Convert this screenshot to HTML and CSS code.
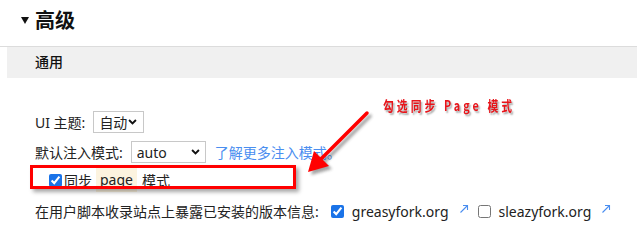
FILE: index.html
```html
<!DOCTYPE html>
<html lang="zh">
<head>
<meta charset="utf-8">
<link rel="stylesheet" href="styles.css">
</head>
<body>
<header class="heading">
  <span class="caret"></span>
  <h1 class="title">高级</h1>
</header>
<div class="band">通用</div>
<section class="settings">
  <div class="row">
    <label>UI 主题:</label>
    <span class="select sel-theme">
      <select><option>自动</option></select>
      <svg class="chev" viewBox="0 0 10 7" width="9" height="6"><path d="M1 1.2 L5 5.2 L9 1.2" fill="none" stroke="#111" stroke-width="2.2"/></svg>
    </span>
  </div>
  <div class="row">
    <label>默认注入模式:</label>
    <span class="select sel-mode">
      <select><option>auto</option></select>
      <svg class="chev" viewBox="0 0 10 7" width="9" height="6"><path d="M1 1.2 L5 5.2 L9 1.2" fill="none" stroke="#111" stroke-width="2.2"/></svg>
    </span>
    <a class="link" href="#">了解更多注入模式。</a>
  </div>
  <div class="row sub">
    <input type="checkbox" checked>
    <span>同步</span><code class="code">page</code><span>模式</span>
  </div>
  <div class="row last">
    <label>在用户脚本收录站点上暴露已安装的版本信息:</label>
    <input type="checkbox" class="cb-site" checked>
    <span class="site">greasyfork.org</span>
    <svg class="ext" viewBox="0 0 10 10" width="10" height="10"><path d="M1.5 8.5 L8.5 1.5 M4 1.5 H8.5 V6" fill="none" stroke="#4a8ef0" stroke-width="1.1"/></svg>
    <input type="checkbox" class="cb-site">
    <span class="site">sleazyfork.org</span>
    <svg class="ext" viewBox="0 0 10 10" width="10" height="10"><path d="M1.5 8.5 L8.5 1.5 M4 1.5 H8.5 V6" fill="none" stroke="#4a8ef0" stroke-width="1.1"/></svg>
  </div>
</section>

<div class="hl-box"></div>
<div class="note">勾选同步 Page 模式</div>
<svg class="arrow" width="637" height="247" viewBox="0 0 637 247">
  <defs>
    <filter id="sh" x="-20%" y="-20%" width="140%" height="140%">
      <feGaussianBlur stdDeviation="1.6"/>
    </filter>
  </defs>
  <g transform="translate(3,3)" opacity="0.45" filter="url(#sh)">
    <path d="M367 113 L319 161" stroke="#333" stroke-width="3.5" stroke-linecap="round"/>
    <path d="M308 172 L314 151 L329 166 Z" fill="#333"/>
  </g>
  <path d="M367 113 L319 161" stroke="#f00" stroke-width="3.5" stroke-linecap="round"/>
  <path d="M308 172 L314 151 L329 166 Z" fill="#f00"/>
</svg>
</body>
</html>
```
FILE: styles.css
```css
html, body {
  margin: 0;
  padding: 0;
  background: #fff;
}
body {
  width: 637px;
  height: 247px;
  overflow: hidden;
  position: relative;
  font-family: "Noto Sans", "Noto Sans CJK SC", sans-serif;
  font-size: 14px;
  color: #222;
}
.heading {
  height: 47px;
  border-bottom: 1px solid #dcdcdc;
  display: flex;
  align-items: center;
  padding-left: 21px;
  box-sizing: border-box;
  padding-bottom: 7px;
}
.caret {
  width: 0;
  height: 0;
  border-left: 4.5px solid transparent;
  border-right: 4.5px solid transparent;
  border-top: 7px solid #111;
  margin-right: 6px;
  margin-top: 2px;
}
.title {
  margin: 0;
  font-size: 20px;
  font-weight: 700;
  color: #111;
  font-family: "Noto Sans CJK SC", sans-serif;
  line-height: 24px;
}
.band {
  margin-left: 7px;
  height: 31px;
  background: #f0f0f0;
  padding-left: 28px;
  line-height: 29px;
  font-weight: 500;
  color: #111;
  font-family: "Noto Sans CJK SC", sans-serif;
}
.settings {
  padding-left: 35px;
  padding-top: 33px;
}
.row {
  display: flex;
  align-items: center;
  height: 22px;
  margin-bottom: 8px;
  white-space: nowrap;
}
.row label {
  margin-right: 8px;
}
.select {
  position: relative;
  display: inline-block;
  height: 22px;
}
.select select {
  appearance: none;
  -webkit-appearance: none;
  height: 22px;
  border: 1px solid #c8c8c8;
  border-radius: 0;
  background: #fff;
  font-family: "Noto Sans", "Noto Sans CJK SC", sans-serif;
  font-size: 14px;
  color: #222;
  padding: 0 0 0 5px;
  margin: 0;
  box-sizing: border-box;
}
.sel-theme select { width: 51px; }
.sel-mode select { width: 75px; }
.chev {
  position: absolute;
  top: 8px;
  pointer-events: none;
}
.sel-theme .chev { right: 7px; }
.sel-mode .chev { right: 6px; }
.link {
  color: #4a8ef0;
  text-decoration: none;
  margin-left: 9px;
}
.row.sub {
  padding-left: 14px;
  height: 22px;
  margin-top: -2px;
  margin-bottom: 9px;
}
input[type=checkbox] {
  width: 13px;
  height: 13px;
  margin: 0 2px 0 0;
  accent-color: #1a73e8;
}
.code {
  font-family: "Noto Sans", sans-serif;
  font-size: 14px;
  background: #fcf3df;
  padding: 2px 4px 3px;
  margin: 0 5px 0 4px;
  line-height: 19px;
}
.row.last label { margin-right: 12px; }
.cb-site { margin-right: 8px !important; }
.site {
  font-size: 14px;
}
.ext {
  margin: 0 9px 5px 10px;
}
.hl-box {
  position: absolute;
  left: 30px;
  top: 165px;
  width: 266px;
  height: 24px;
  box-sizing: border-box;
  border: 3.5px solid #f00;
  box-shadow: 3px 3px 4px rgba(0,0,0,0.35);
}
.note {
  position: absolute;
  left: 383px;
  top: 95px;
  color: #e8141a;
  font-family: "Noto Sans CJK SC", sans-serif;
  font-size: 14px;
  font-weight: 700;
  letter-spacing: 4px;
  transform: scaleX(0.77);
  transform-origin: left center;
  text-shadow: 2px 2px 2px rgba(0,0,0,0.35);
  white-space: nowrap;
}
.arrow {
  position: absolute;
  left: 0;
  top: 0;
  pointer-events: none;
}
```
